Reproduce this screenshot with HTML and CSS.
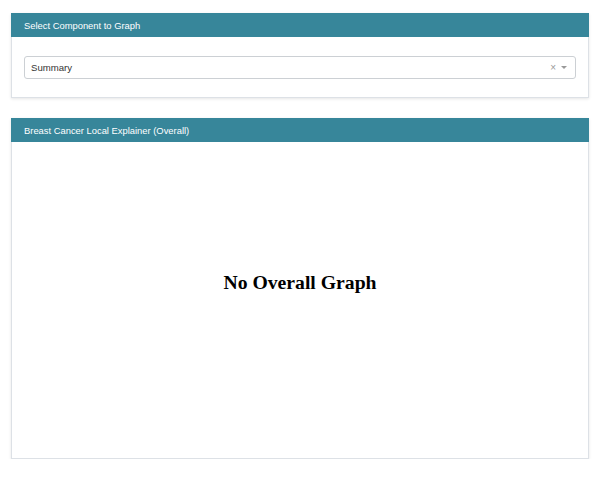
FILE: index.html
```html
<!DOCTYPE html>
<html>
<head>
<meta charset="utf-8">
<link rel="stylesheet" href="styles.css">
</head>
<body>
<div class="page">
  <div class="card card-select">
    <div class="card-header">Select Component to Graph</div>
    <div class="card-body">
      <div class="select">
        <span class="select-value">Summary</span>
        <span class="select-clear">×</span>
        <span class="select-arrow"></span>
      </div>
    </div>
  </div>
  <div class="card card-graph">
    <div class="card-header">Breast Cancer Local Explainer (Overall)</div>
    <div class="graph-body">
      <h3 class="no-graph">No Overall Graph</h3>
    </div>
  </div>
</div>
</body>
</html>
```

FILE: styles.css
```css
html, body {
  margin: 0;
  padding: 0;
  background: #ffffff;
}
.page {
  padding: 13px 11px 0 11px;
  display: flex;
  flex-direction: column;
  gap: 20px;
}
.card {
  border: 1px solid #dde1e6;
  box-shadow: 0 1px 3px rgba(0,0,0,0.1);
  background: #fff;
}
.card-header {
  background: #37869a;
  color: #ffffff;
  font-family: "Liberation Sans", Arial, sans-serif;
  font-size: 9.4px;
  height: 24px;
  line-height: 26px;
  padding-left: 13px;
  margin: -1px -1px 0 -1px;
}
.card-body {
  padding: 19px 12px 18px 12px;
}
.select {
  height: 21px;
  border: 1px solid #ccd0d4;
  border-radius: 3px;
  display: flex;
  align-items: center;
  padding: 0 8px 0 6px;
  font-family: "Liberation Sans", Arial, sans-serif;
  font-size: 9.6px;
  color: #333;
}
.select-value {
  flex: 1;
}
.select-clear {
  color: #999;
  font-size: 10px;
  margin-right: 5px;
}
.select-arrow {
  width: 0;
  height: 0;
  border-left: 3px solid transparent;
  border-right: 3px solid transparent;
  border-top: 3px solid #999;
}
.graph-body {
  height: 316px;
  display: flex;
  align-items: flex-start;
  justify-content: center;
}
.no-graph {
  margin: 129px 0 0 0;
  font-family: "Liberation Serif", "Times New Roman", serif;
  font-weight: bold;
  font-size: 19.7px;
  color: #000;
}
```
